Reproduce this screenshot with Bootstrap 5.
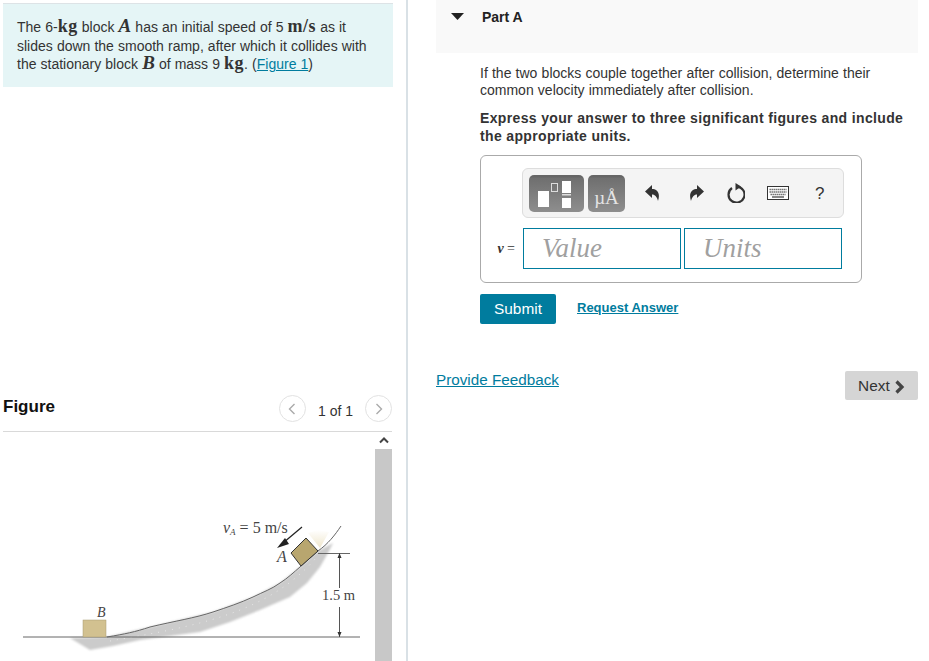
<!DOCTYPE html>
<html lang="en">

<head>
    <meta charset="UTF-8" />
    <meta name="viewport" content="width=device-width, initial-scale=1.0" />
    <title>Part A</title>
    <link href="https://cdn.jsdelivr.net/npm/bootstrap@5.3.0/dist/css/bootstrap.min.css" rel="stylesheet" />
    <style>
        html, body {
            height: 661px;
            overflow: hidden;
        }

        body {
            font-family: "Liberation Sans", Arial, sans-serif;
            font-size: 14px;
            line-height: 17px;
            color: #333;
            background: #fff;
        }

        a {
            color: #007c9e;
        }

        .pane-left {
            width: 408px;
            height: 661px;
            padding: 3px 14px 0 3px;
            border-right: 2px solid #d9e1e6;
            flex: none;
        }

        .pane-right {
            width: 482px;
            margin-left: 28px;
            flex: none;
        }

        .intro-box {
            height: 84px;
            margin-right: -1px;
            padding: 14px 14px 0;
            background: #e5f5f6;
            border-top: 1px solid #dde3e6;
            line-height: 18.5px;
            word-spacing: .2px;
        }

        .mth {
            font-family: "Liberation Serif", serif;
            font-size: 18px;
            font-weight: 700;
            letter-spacing: .5px;
            line-height: 0;
        }

        .mth-i {
            font-size: 19px;
            font-style: italic;
            letter-spacing: 0;
        }

        .fig-head {
            height: 345px;
            padding-bottom: 9px;
            border-bottom: 1px solid #d9d9d9;
        }

        .fig-title {
            font-size: 17px;
            font-weight: 700;
            color: #111;
            line-height: 20px;
            margin-bottom: 5px;
        }

        .pager-btn {
            width: 27px;
            height: 27px;
            padding: 0;
            border: 1px solid #e2e2e2;
            border-radius: 50%;
            background: #fff;
        }

        .pager-text {
            margin: 0 12px;
            padding-top: 6px;
        }

        .fig-area {
            height: 229px;
            overflow: hidden;
        }

        .fig-scroll {
            width: 17px;
            background: #c8c8c8;
            flex: none;
        }

        .fig-scroll-top {
            height: 17px;
            background: #fff;
        }

        .part-head {
            height: 53px;
            background: #f9f9f9;
            padding: 9px 0 0 15px;
        }

        .part-title {
            font-weight: 700;
            margin-left: 18px;
            color: #222;
        }

        .part-body {
            padding: 12px 0 0 44px;
        }

        .part-body p {
            margin-bottom: 10px;
            word-spacing: .3px;
        }

        .part-body p.lead-bold {
            font-weight: 700;
            line-height: 18px;
            letter-spacing: .35px;
            word-spacing: 0;
            margin-bottom: 11px;
        }

        .answer-box {
            width: 382px;
            height: 128px;
            margin-top: -1px;
            padding: 12px 17px 0 0;
            border: 1px solid #aaa;
            border-radius: 6px;
        }

        .tool-bar {
            width: 322px;
            height: 50px;
            margin-left: 41px;
            padding: 0 6px;
            background: #f4f4f4;
            border: 1px solid #ddd;
            border-radius: 6px;
        }

        .tpl-btn {
            height: 37px;
            padding: 0;
            border: 0;
            border-radius: 5px;
            background: linear-gradient(#666 0, #666 2px, #6f6f6f 3px, #8e8e8e 100%);
            color: #e4e4e4;
        }

        .tpl-one {
            width: 55px;
        }

        .tpl-two {
            width: 37px;
            margin-left: 4px;
            font-family: "Liberation Serif", serif;
            font-size: 19px;
            line-height: 1;
            padding-top: 9px;
        }

        .tool-icon {
            height: 37px;
            padding: 0;
            border: 0;
            background: none;
            color: #333;
        }

        .var-label {
            width: 42px;
            padding-right: 8px;
            text-align: right;
            font-family: "Liberation Serif", serif;
            font-size: 14px;
        }

        .answer-row {
            margin-top: 10px;
        }

        .answer-input.form-control {
            width: 158px;
            height: 41px;
            padding: 0 0 0 18px;
            border: 1px solid #007c9e;
            border-radius: 0;
            font-family: "Liberation Serif", serif;
            font-size: 27px;
            font-style: italic;
            flex: none;
        }

        .answer-input.form-control::placeholder {
            color: #a0a0a0;
            opacity: 1;
        }

        .answer-gap {
            margin-left: 3px;
        }

        .action-row {
            margin-top: 11px;
        }

        .submit-btn.btn {
            width: 76px;
            height: 30px;
            padding: 0;
            font-size: 15.4px;
            line-height: 30px;
            color: #fff;
            background: #007c9e;
            border: 0;
            border-radius: 2px;
        }

        .request-link {
            margin-left: 21px;
            margin-top: 5px;
            font-size: 13px;
            font-weight: 700;
        }

        .foot-row {
            margin-top: 47px;
        }

        .feedback-link {
            font-size: 15.25px;
            line-height: 18px;
        }

        .next-btn.btn {
            width: 73px;
            height: 29px;
            padding: 0;
            font-size: 15.4px;
            line-height: 29px;
            color: #333;
            background: #d5d5d5;
            border: 0;
            border-radius: 2px;
        }
    </style>
</head>

<body>
    <div class="d-flex">
        <div class="pane-left">
            <div class="intro-box">
                The 6-<span class="mth">kg</span> block <span class="mth mth-i">A</span> has an initial speed of 5 <span class="mth">m/s</span> as it slides down the smooth ramp, after which it collides with the stationary block <span class="mth mth-i">B</span> of mass 9 <span class="mth">kg</span>. (<a href="#">Figure 1</a>)
            </div>

            <div class="fig-head d-flex align-items-end justify-content-between">
                <div class="fig-title">Figure</div>
                <div class="d-flex align-items-center">
                    <button type="button" class="pager-btn d-flex align-items-center justify-content-center">
                        <svg width="8" height="12" viewBox="0 0 8 12"><path d="M6.5 1 L1.5 6 L6.5 11" fill="none" stroke="#aaa" stroke-width="1.4" /></svg>
                    </button>
                    <span class="pager-text">1 of 1</span>
                    <button type="button" class="pager-btn d-flex align-items-center justify-content-center">
                        <svg width="8" height="12" viewBox="0 0 8 12"><path d="M1.5 1 L6.5 6 L1.5 11" fill="none" stroke="#aaa" stroke-width="1.4" /></svg>
                    </button>
                </div>
            </div>

            <div class="fig-area d-flex">
                <svg class="flex-grow-1" width="372" height="229" viewBox="3 432 372 229" font-family="Liberation Serif, serif" fill="#444">
                    <defs>
                        <linearGradient id="fade" x1="0" y1="1" x2="0" y2="0">
                            <stop offset="0" stop-color="#efe6cc" />
                            <stop offset="1" stop-color="#fff" />
                        </linearGradient>
                        <filter id="rough" x="-5%" y="-5%" width="110%" height="110%">
                            <feGaussianBlur stdDeviation="1" />
                        </filter>
                    </defs>
                    <path d="M70 638 L107 637 L150 627 L213 612 L253 597 L280 583 L300 567 L318 551 L333 543 L328 553 L320 567 L307 583 L290 597 L260 610 L230 622 L200 632 L140 640 L113 646 L90 650 Z" fill="#cbcbcb" filter="url(#rough)" />
                    <path d="M110 641 C150 634 200 626 240 610 C270 598 295 582 316 558" fill="none" stroke="#e8e8e8" stroke-width="1" stroke-dasharray="1 6" />
                    <path d="M308 533 L318 530 L329 532 L320 548 Z" fill="url(#fade)" />
                    <path d="M23 637 H360" stroke="#666" stroke-width="1" />
                    <path d="M107 637 C125 634 135 632 150 627 C175 621 195 618 213 612 C228 607 240 603 253 597 C263 592 272 589 280 583 C288 578 294 572 300 567 L318 551 C328 544 335 535 341 526" fill="none" stroke="#666" stroke-width="1" />
                    <rect x="83" y="620" width="23" height="17" fill="#d2c190" stroke="#a89a72" stroke-width=".5" />
                    <path d="M306 538 L318 551 L301 566 L291 553 Z" fill="#b8a66f" stroke="#333" stroke-width="1" />
                    <path d="M318 553.5 H350" stroke="#666" stroke-width="1" />
                    <path d="M339.5 553 V588 M339.5 607 V637" stroke="#555" stroke-width="1" />
                    <path d="M339.5 553 l-2 5 h4 Z M339.5 637 l-2 -5 h4 Z" fill="#333" />
                    <path d="M302 527 L283 543" stroke="#222" stroke-width="1.2" />
                    <path d="M277 548 L285 538 L289 544 Z" fill="#222" />
                    <text x="223" y="533" font-size="16"><tspan font-style="italic">v</tspan><tspan font-size="9" font-style="italic" dy="2">A</tspan><tspan dy="-2"> = 5 m/s</tspan></text>
                    <text x="277" y="562" font-size="16" font-style="italic">A</text>
                    <text x="97" y="617" font-size="14" font-style="italic">B</text>
                    <text x="322" y="600" font-size="14.5">1.5 m</text>
                </svg>
                <div class="fig-scroll">
                    <div class="fig-scroll-top d-flex align-items-center justify-content-center">
                        <svg width="10" height="7" viewBox="0 0 10 7"><path d="M1 5.5 L5 1.5 L9 5.5" fill="none" stroke="#444" stroke-width="2" /></svg>
                    </div>
                </div>
            </div>
        </div>

        <div class="pane-right">
            <div class="part-head d-flex align-items-start">
                <svg class="mt-1" width="13" height="7" viewBox="0 0 13 7"><path d="M0 0 H13 L6.5 7 Z" fill="#222" /></svg>
                <span class="part-title">Part A</span>
            </div>

            <div class="part-body">
                <p>If the two blocks couple together after collision, determine their common velocity immediately after collision.</p>
                <p class="lead-bold">Express your answer to three significant figures and include the appropriate units.</p>

                <div class="answer-box">
                    <div class="tool-bar d-flex align-items-center">
                        <button type="button" class="tpl-btn tpl-one" aria-label="Templates">
                            <svg width="55" height="37" viewBox="0 0 55 37">
                                <rect x="9" y="16" width="11" height="16" fill="#fff" />
                                <rect x="22.5" y="8.5" width="6" height="8" fill="none" stroke="#ddd" stroke-width="1" />
                                <rect x="33" y="6" width="9" height="12" fill="#fff" />
                                <rect x="33" y="19" width="9" height="1.5" fill="#ddd" />
                                <rect x="33" y="23" width="9" height="10" fill="#fff" />
                            </svg>
                        </button>
                        <button type="button" class="tpl-btn tpl-two">µÅ</button>
                        <div class="flex-grow-1 d-flex align-items-center">
                            <button type="button" class="tool-icon d-flex align-items-center" style="margin-left: 20px" aria-label="Undo">
                                <svg width="15" height="16" viewBox="0 0 15 16"><path d="M0 6.5 L7 0 V4 C11 4 16 7 13 16 C12 12 10 9.5 7 9.5 V13 Z" fill="#333" /></svg>
                            </button>
                            <button type="button" class="tool-icon d-flex align-items-center" style="margin-left: 29px" aria-label="Redo">
                                <svg width="15" height="16" viewBox="0 0 15 16"><path d="M15 6.5 L8 0 V4 C4 4 -1 7 2 16 C3 12 5 9.5 8 9.5 V13 Z" fill="#333" /></svg>
                            </button>
                            <button type="button" class="tool-icon d-flex align-items-center" style="margin-left: 23px" aria-label="Reset">
                                <svg width="18" height="20" viewBox="0 0 18 20"><path d="M5 5 A8 8 0 1 0 10 3.6" fill="none" stroke="#333" stroke-width="2.2" /><path d="M8.5 0 L14 3.4 L8.5 7.5 Z" fill="#333" /></svg>
                            </button>
                            <button type="button" class="tool-icon d-flex align-items-center" style="margin-left: 22px" aria-label="Keyboard">
                                <svg width="22" height="14" viewBox="0 0 22 14"><rect x=".5" y=".5" width="21" height="13" fill="#fff" stroke="#333" /><path d="M2.5 3.5 H19.5 M2.5 6 H19.5 M3.5 8.5 H18.5" stroke="#666" stroke-width="1.4" stroke-dasharray="1.4 .6" fill="none" /><path d="M5 11 H17" stroke="#555" stroke-width="1.4" /></svg>
                            </button>
                            <button type="button" class="tool-icon" style="margin-left: 26px; font-size: 17px" aria-label="Help">?</button>
                        </div>
                    </div>
                    <div class="answer-row d-flex align-items-center">
                        <span class="var-label"><b><i>v</i></b> =</span>
                        <input type="text" class="form-control answer-input" placeholder="Value" />
                        <input type="text" class="form-control answer-input answer-gap" placeholder="Units" />
                    </div>
                </div>

                <div class="action-row d-flex align-items-start">
                    <button type="button" class="btn submit-btn">Submit</button>
                    <a href="#" class="request-link">Request Answer</a>
                </div>
            </div>

            <div class="foot-row d-flex align-items-start justify-content-between">
                <a href="#" class="feedback-link">Provide Feedback</a>
                <button type="button" class="btn next-btn">Next <svg width="11" height="14" viewBox="0 0 11 14"><path d="M2.5 1.5 L8 7 L2.5 12.5" fill="none" stroke="#444" stroke-width="3.2" /></svg></button>
            </div>
        </div>
    </div>

    <script src="https://cdn.jsdelivr.net/npm/bootstrap@5.3.0/dist/js/bootstrap.bundle.min.js"></script>
</body>

</html>
